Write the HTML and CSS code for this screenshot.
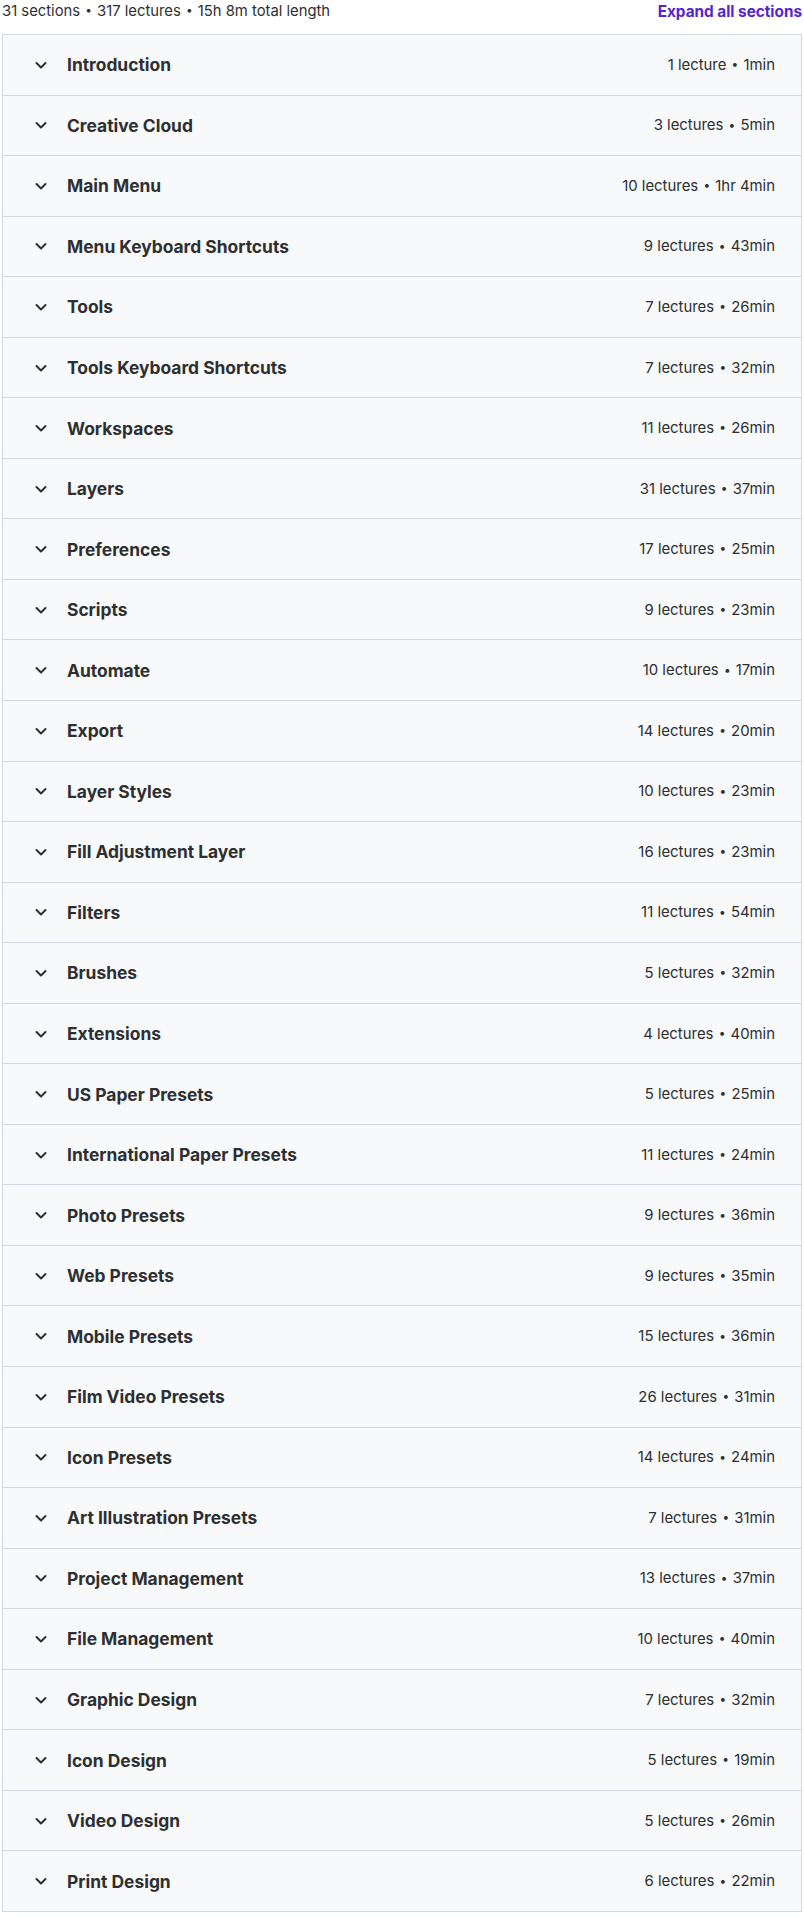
FILE: index.html
```html
<!DOCTYPE html>
<html>
<head>
<meta charset="utf-8">
<link rel="stylesheet" href="styles.css">
</head>
<body>
<div class="page">
  <div class="summary">
    <span class="counts">31 sections <span class="dot">•</span> 317 lectures <span class="dot">•</span> 15h 8m total length</span>
    <span class="expand">Expand all sections</span>
  </div>
  <div class="sections" id="sections">
    <div class="row"><span class="chev"><svg viewBox="0 0 24 24"><path d="M7.5 10l4.5 4.5 4.5-4.5"/></svg></span><span class="title">Introduction</span><span class="meta">1 lecture <span class="dot">•</span> 1min</span></div>
    <div class="row"><span class="chev"><svg viewBox="0 0 24 24"><path d="M7.5 10l4.5 4.5 4.5-4.5"/></svg></span><span class="title">Creative Cloud</span><span class="meta">3 lectures <span class="dot">•</span> 5min</span></div>
    <div class="row"><span class="chev"><svg viewBox="0 0 24 24"><path d="M7.5 10l4.5 4.5 4.5-4.5"/></svg></span><span class="title">Main Menu</span><span class="meta">10 lectures <span class="dot">•</span> 1hr 4min</span></div>
    <div class="row"><span class="chev"><svg viewBox="0 0 24 24"><path d="M7.5 10l4.5 4.5 4.5-4.5"/></svg></span><span class="title">Menu Keyboard Shortcuts</span><span class="meta">9 lectures <span class="dot">•</span> 43min</span></div>
    <div class="row"><span class="chev"><svg viewBox="0 0 24 24"><path d="M7.5 10l4.5 4.5 4.5-4.5"/></svg></span><span class="title">Tools</span><span class="meta">7 lectures <span class="dot">•</span> 26min</span></div>
    <div class="row"><span class="chev"><svg viewBox="0 0 24 24"><path d="M7.5 10l4.5 4.5 4.5-4.5"/></svg></span><span class="title">Tools Keyboard Shortcuts</span><span class="meta">7 lectures <span class="dot">•</span> 32min</span></div>
    <div class="row"><span class="chev"><svg viewBox="0 0 24 24"><path d="M7.5 10l4.5 4.5 4.5-4.5"/></svg></span><span class="title">Workspaces</span><span class="meta">11 lectures <span class="dot">•</span> 26min</span></div>
    <div class="row"><span class="chev"><svg viewBox="0 0 24 24"><path d="M7.5 10l4.5 4.5 4.5-4.5"/></svg></span><span class="title">Layers</span><span class="meta">31 lectures <span class="dot">•</span> 37min</span></div>
    <div class="row"><span class="chev"><svg viewBox="0 0 24 24"><path d="M7.5 10l4.5 4.5 4.5-4.5"/></svg></span><span class="title">Preferences</span><span class="meta">17 lectures <span class="dot">•</span> 25min</span></div>
    <div class="row"><span class="chev"><svg viewBox="0 0 24 24"><path d="M7.5 10l4.5 4.5 4.5-4.5"/></svg></span><span class="title">Scripts</span><span class="meta">9 lectures <span class="dot">•</span> 23min</span></div>
    <div class="row"><span class="chev"><svg viewBox="0 0 24 24"><path d="M7.5 10l4.5 4.5 4.5-4.5"/></svg></span><span class="title">Automate</span><span class="meta">10 lectures <span class="dot">•</span> 17min</span></div>
    <div class="row"><span class="chev"><svg viewBox="0 0 24 24"><path d="M7.5 10l4.5 4.5 4.5-4.5"/></svg></span><span class="title">Export</span><span class="meta">14 lectures <span class="dot">•</span> 20min</span></div>
    <div class="row"><span class="chev"><svg viewBox="0 0 24 24"><path d="M7.5 10l4.5 4.5 4.5-4.5"/></svg></span><span class="title">Layer Styles</span><span class="meta">10 lectures <span class="dot">•</span> 23min</span></div>
    <div class="row"><span class="chev"><svg viewBox="0 0 24 24"><path d="M7.5 10l4.5 4.5 4.5-4.5"/></svg></span><span class="title">Fill Adjustment Layer</span><span class="meta">16 lectures <span class="dot">•</span> 23min</span></div>
    <div class="row"><span class="chev"><svg viewBox="0 0 24 24"><path d="M7.5 10l4.5 4.5 4.5-4.5"/></svg></span><span class="title">Filters</span><span class="meta">11 lectures <span class="dot">•</span> 54min</span></div>
    <div class="row"><span class="chev"><svg viewBox="0 0 24 24"><path d="M7.5 10l4.5 4.5 4.5-4.5"/></svg></span><span class="title">Brushes</span><span class="meta">5 lectures <span class="dot">•</span> 32min</span></div>
    <div class="row"><span class="chev"><svg viewBox="0 0 24 24"><path d="M7.5 10l4.5 4.5 4.5-4.5"/></svg></span><span class="title">Extensions</span><span class="meta">4 lectures <span class="dot">•</span> 40min</span></div>
    <div class="row"><span class="chev"><svg viewBox="0 0 24 24"><path d="M7.5 10l4.5 4.5 4.5-4.5"/></svg></span><span class="title">US Paper Presets</span><span class="meta">5 lectures <span class="dot">•</span> 25min</span></div>
    <div class="row"><span class="chev"><svg viewBox="0 0 24 24"><path d="M7.5 10l4.5 4.5 4.5-4.5"/></svg></span><span class="title">International Paper Presets</span><span class="meta">11 lectures <span class="dot">•</span> 24min</span></div>
    <div class="row"><span class="chev"><svg viewBox="0 0 24 24"><path d="M7.5 10l4.5 4.5 4.5-4.5"/></svg></span><span class="title">Photo Presets</span><span class="meta">9 lectures <span class="dot">•</span> 36min</span></div>
    <div class="row"><span class="chev"><svg viewBox="0 0 24 24"><path d="M7.5 10l4.5 4.5 4.5-4.5"/></svg></span><span class="title">Web Presets</span><span class="meta">9 lectures <span class="dot">•</span> 35min</span></div>
    <div class="row"><span class="chev"><svg viewBox="0 0 24 24"><path d="M7.5 10l4.5 4.5 4.5-4.5"/></svg></span><span class="title">Mobile Presets</span><span class="meta">15 lectures <span class="dot">•</span> 36min</span></div>
    <div class="row"><span class="chev"><svg viewBox="0 0 24 24"><path d="M7.5 10l4.5 4.5 4.5-4.5"/></svg></span><span class="title">Film Video Presets</span><span class="meta">26 lectures <span class="dot">•</span> 31min</span></div>
    <div class="row"><span class="chev"><svg viewBox="0 0 24 24"><path d="M7.5 10l4.5 4.5 4.5-4.5"/></svg></span><span class="title">Icon Presets</span><span class="meta">14 lectures <span class="dot">•</span> 24min</span></div>
    <div class="row"><span class="chev"><svg viewBox="0 0 24 24"><path d="M7.5 10l4.5 4.5 4.5-4.5"/></svg></span><span class="title">Art Illustration Presets</span><span class="meta">7 lectures <span class="dot">•</span> 31min</span></div>
    <div class="row"><span class="chev"><svg viewBox="0 0 24 24"><path d="M7.5 10l4.5 4.5 4.5-4.5"/></svg></span><span class="title">Project Management</span><span class="meta">13 lectures <span class="dot">•</span> 37min</span></div>
    <div class="row"><span class="chev"><svg viewBox="0 0 24 24"><path d="M7.5 10l4.5 4.5 4.5-4.5"/></svg></span><span class="title">File Management</span><span class="meta">10 lectures <span class="dot">•</span> 40min</span></div>
    <div class="row"><span class="chev"><svg viewBox="0 0 24 24"><path d="M7.5 10l4.5 4.5 4.5-4.5"/></svg></span><span class="title">Graphic Design</span><span class="meta">7 lectures <span class="dot">•</span> 32min</span></div>
    <div class="row"><span class="chev"><svg viewBox="0 0 24 24"><path d="M7.5 10l4.5 4.5 4.5-4.5"/></svg></span><span class="title">Icon Design</span><span class="meta">5 lectures <span class="dot">•</span> 19min</span></div>
    <div class="row"><span class="chev"><svg viewBox="0 0 24 24"><path d="M7.5 10l4.5 4.5 4.5-4.5"/></svg></span><span class="title">Video Design</span><span class="meta">5 lectures <span class="dot">•</span> 26min</span></div>
    <div class="row"><span class="chev"><svg viewBox="0 0 24 24"><path d="M7.5 10l4.5 4.5 4.5-4.5"/></svg></span><span class="title">Print Design</span><span class="meta">6 lectures <span class="dot">•</span> 22min</span></div>
  </div>
</div>
</body>
</html>
```
FILE: styles.css
```css
html, body {
  margin: 0;
  padding: 0;
  background: #ffffff;
}
body {
  font-family: Inter, "Liberation Sans", Arial, sans-serif;
  color: #2d2f31;
}
.page {
  padding: 0 2px;
}
.summary {
  display: flex;
  justify-content: space-between;
  align-items: center;
  height: 22px;
  margin-bottom: 12px;
  font-size: 14.8px;
}
.counts {
  color: #2d2f31;
}
.dot {
  font-size: 0.8em;
  vertical-align: 0.14em;
  margin: 0 1px;
}
.expand {
  color: #5624d0;
  font-weight: 700;
  font-size: 15.3px;
}
.sections {
  border: 1px solid #d1d7dc;
}
.row {
  display: flex;
  align-items: center;
  height: 59.55px;
  padding: 0 26px 0 26px;
  background: #f7f9fa;
  border-bottom: 1px solid #d1d7dc;
}
.row:last-child {
  border-bottom: none;
}
.chev {
  width: 24px;
  height: 24px;
  flex: none;
  display: flex;
}
.chev svg {
  width: 24px;
  height: 24px;
  fill: none;
  stroke: #2d2f31;
  stroke-width: 2;
  stroke-linecap: round;
  stroke-linejoin: round;
}
.title {
  flex: 1;
  margin-left: 14px;
  font-size: 17.4px;
  font-weight: 700;
  color: #2d2f31;
}
.meta {
  font-size: 14.9px;
  color: #2d2f31;
}
```
